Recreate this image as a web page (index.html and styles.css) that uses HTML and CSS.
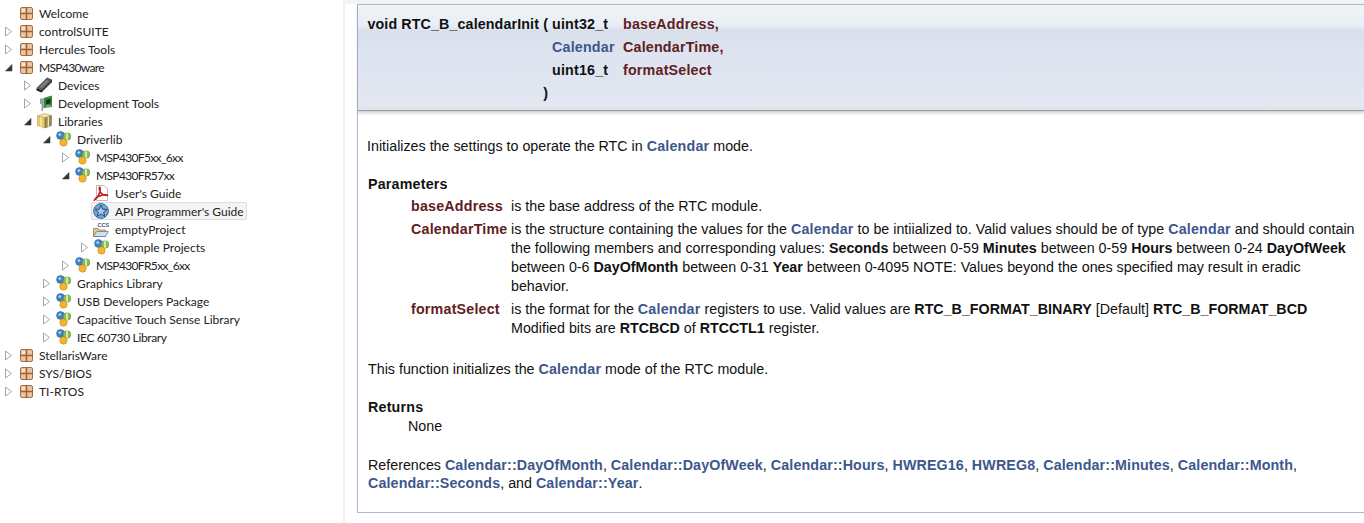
FILE: index.html
```html
<!DOCTYPE html>
<html lang="en">
<head>
  <meta charset="UTF-8" />
  <title>RTC_B_calendarInit</title>
  <link rel="stylesheet" href="styles.css">
</head>
<body>
  <svg class="defs" width="0" height="0">
    <symbol id="closed" viewBox="0 0 9 11">
      <path d="M1.5 1 L7.5 5.5 L1.5 10 Z" fill="#fff" stroke="#a6a6a6" />
    </symbol>
    <symbol id="open" viewBox="0 0 9 11">
      <path d="M8 2.5 L8 9 L1.5 9 Z" fill="#333" stroke="#444" stroke-width=".6" />
    </symbol>
    <symbol id="pkg" viewBox="0 0 16 16">
      <rect x="3.5" y="2.5" width="12" height="12" rx="1.5" fill="#e8c4a0" stroke="#a86e3e" />
      <path d="M9.5 2 V15 M3 8.5 H16" stroke="#9e6236" stroke-width="1.5" />
      <path d="M5 4 H8 V7 H5 Z" fill="#f6e2cc" />
    </symbol>
    <symbol id="chip" viewBox="0 0 16 16">
      <path d="M.5 11 L11 .5 L16 2.5 L5.5 13 Z" fill="#55585c" />
      <path d="M5.5 13 L16 2.5 V5 L5.5 15.5 L.5 13.5 V11 Z" fill="#1f2022" />
      <path d="M3.5 10 L10.5 3 L13 4 L6 11 Z" fill="#7c8084" />
      <path d="M7 14 L7.6 12.5 M9 12 L9.6 10.5 M11 10 L11.6 8.5 M13 8 L13.6 6.5" stroke="#9a9da0" stroke-width=".8" />
    </symbol>
    <symbol id="board" viewBox="0 0 16 16">
      <path d="M7.5 3 L16 .5 V12 L7.5 13 Z" fill="#2f8a3c" />
      <path d="M10 5 L14.5 3.5 V8.5 L10 9.3 Z" fill="#17351c" />
      <path d="M10 10.5 H15 V11.5 H10 Z" fill="#c9c27a" />
      <path d="M4 3.5 H7.5 V12 L7 16 H5.5 L5.5 9 L4 9 Z" fill="#8fa0a8" />
    </symbol>
    <symbol id="cube" viewBox="0 0 16 16">
      <path d="M1.5 3 L8 .5 L15.5 2.5 L9 5 Z" fill="#f5e6a6" stroke="#a58f4a" stroke-width=".5" />
      <path d="M1.5 3 L9 5 V15 L1.5 12.5 Z" fill="#e8c864" stroke="#a58f4a" stroke-width=".5" />
      <path d="M9 5 L15.5 2.5 V12.5 L9 15 Z" fill="#9a8850" stroke="#7a6c3a" stroke-width=".5" />
      <path d="M5 4 V13.7 M12.3 3.8 V13.8" stroke="#f8efc8" stroke-width="1.2" />
    </symbol>
    <symbol id="feature" viewBox="0 0 16 16">
      <circle cx="5.5" cy="4.5" r="3.9" fill="#3f83c6" stroke="#2c5f96" stroke-width=".6" />
      <circle cx="4.8" cy="3.6" r="1.4" fill="#a9d3f2" />
      <circle cx="12" cy="5.5" r="3.8" fill="#8cc04a" stroke="#5c8c30" stroke-width=".6" />
      <path d="M12 1.5 V9.5" stroke="#fff" stroke-width="1.2" />
      <circle cx="8.5" cy="11.5" r="3.7" fill="#f4b42c" stroke="#c88a1c" stroke-width=".6" />
    </symbol>
    <symbol id="pdf" viewBox="0 0 16 16">
      <path d="M3.5 .5 H11 L14.5 4 V15.5 H3.5 Z" fill="#fff" stroke="#b9b9b9" />
      <path d="M1.5 15 C5 13 8 6 7 2.5 C6.5 1.5 6 3 6.5 5 C7.5 9 10 10.5 14.5 10.5 C15 9.5 11 9.5 8 10.5 C5 11.5 2 13 1.5 15 Z" fill="none" stroke="#c8201c" stroke-width="1.6" />
    </symbol>
    <symbol id="api" viewBox="0 0 16 16">
      <circle cx="8" cy="8" r="7.4" fill="#7aa5d0" stroke="#3a6a9e" />
      <path d="M8 2 L9.7 6.2 L14 6.4 L10.6 9.2 L11.8 13.4 L8 11 L4.2 13.4 L5.4 9.2 L2 6.4 L6.3 6.2 Z" fill="#a9c9e6" stroke="#1f4f86" />
    </symbol>
    <symbol id="ccs" viewBox="0 0 16 16">
      <text x="4.5" y="5.5" class="ccs-text">CCS</text>
      <path d="M.5 7.5 H5 L6 9 H12.5 V15.5 H.5 Z" fill="#e9c878" stroke="#8a7440" stroke-width=".7" />
      <path d="M.5 15.5 L3.5 10.5 H15.5 L12.5 15.5 Z" fill="#cfe0f2" stroke="#54708f" stroke-width=".7" />
    </symbol>
  </svg>

  <div class="page">
    <nav class="tree">
      <div class="row"><span class="arrow"></span><svg class="icon"><use href="#pkg"/></svg><span class="label">Welcome</span></div>
      <div class="row"><svg class="arrow"><use href="#closed"/></svg><svg class="icon"><use href="#pkg"/></svg><span class="label">controlSUITE</span></div>
      <div class="row"><svg class="arrow"><use href="#closed"/></svg><svg class="icon"><use href="#pkg"/></svg><span class="label">Hercules Tools</span></div>
      <div class="row"><svg class="arrow"><use href="#open"/></svg><svg class="icon"><use href="#pkg"/></svg><span class="label tight">MSP430ware</span></div>
      <div class="row lv1"><svg class="arrow"><use href="#closed"/></svg><svg class="icon"><use href="#chip"/></svg><span class="label">Devices</span></div>
      <div class="row lv1"><svg class="arrow"><use href="#closed"/></svg><svg class="icon"><use href="#board"/></svg><span class="label">Development Tools</span></div>
      <div class="row lv1"><svg class="arrow"><use href="#open"/></svg><svg class="icon"><use href="#cube"/></svg><span class="label">Libraries</span></div>
      <div class="row lv2"><svg class="arrow"><use href="#open"/></svg><svg class="icon"><use href="#feature"/></svg><span class="label">Driverlib</span></div>
      <div class="row lv3"><svg class="arrow"><use href="#closed"/></svg><svg class="icon"><use href="#feature"/></svg><span class="label tight">MSP430F5xx_6xx</span></div>
      <div class="row lv3"><svg class="arrow"><use href="#open"/></svg><svg class="icon"><use href="#feature"/></svg><span class="label tight">MSP430FR57xx</span></div>
      <div class="row lv4"><span class="arrow"></span><svg class="icon"><use href="#pdf"/></svg><span class="label">User's Guide</span></div>
      <div class="row lv4"><span class="arrow"></span><span class="selected"><svg class="icon"><use href="#api"/></svg><span class="label">API Programmer's Guide</span></span></div>
      <div class="row lv4"><span class="arrow"></span><svg class="icon"><use href="#ccs"/></svg><span class="label">emptyProject</span></div>
      <div class="row lv4"><svg class="arrow"><use href="#closed"/></svg><svg class="icon"><use href="#feature"/></svg><span class="label">Example Projects</span></div>
      <div class="row lv3"><svg class="arrow"><use href="#closed"/></svg><svg class="icon"><use href="#feature"/></svg><span class="label tight">MSP430FR5xx_6xx</span></div>
      <div class="row lv2"><svg class="arrow"><use href="#closed"/></svg><svg class="icon"><use href="#feature"/></svg><span class="label">Graphics Library</span></div>
      <div class="row lv2"><svg class="arrow"><use href="#closed"/></svg><svg class="icon"><use href="#feature"/></svg><span class="label">USB Developers Package</span></div>
      <div class="row lv2"><svg class="arrow"><use href="#closed"/></svg><svg class="icon"><use href="#feature"/></svg><span class="label">Capacitive Touch Sense Library</span></div>
      <div class="row lv2"><svg class="arrow"><use href="#closed"/></svg><svg class="icon"><use href="#feature"/></svg><span class="label digits">IEC 60730 Library</span></div>
      <div class="row"><svg class="arrow"><use href="#closed"/></svg><svg class="icon"><use href="#pkg"/></svg><span class="label">StellarisWare</span></div>
      <div class="row"><svg class="arrow"><use href="#closed"/></svg><svg class="icon"><use href="#pkg"/></svg><span class="label">SYS/BIOS</span></div>
      <div class="row"><svg class="arrow"><use href="#closed"/></svg><svg class="icon"><use href="#pkg"/></svg><span class="label">TI-RTOS</span></div>
    </nav>

    <main class="doc">
      <div class="memitem">
        <div class="memproto">
          <span class="memname">void RTC_B_calendarInit (</span>
          <span class="type">uint32_t</span>
          <span class="paramname">baseAddress,</span>
          <span></span>
          <span class="type"><a>Calendar</a></span>
          <span class="paramname">CalendarTime,</span>
          <span></span>
          <span class="type">uint16_t</span>
          <span class="paramname">formatSelect</span>
          <span class="memname">)</span>
        </div>
        <div class="memdoc">
          <p class="intro">Initializes the settings to operate the RTC in <a>Calendar</a> mode.</p>

          <h4>Parameters</h4>
          <div class="params">
            <span class="paramname">baseAddress</span>
            <span>is the base address of the RTC module.</span>
            <span class="paramname">CalendarTime</span>
            <span>is the structure containing the values for the <a>Calendar</a> to be intiialized to. Valid values should be of type <a>Calendar</a> and should contain the following members and corresponding values: <b>Seconds</b> between 0-59 <b>Minutes</b> between 0-59 <b>Hours</b> between 0-24 <b>DayOfWeek</b> between 0-6 <b>DayOfMonth</b> between 0-31 <b>Year</b> between 0-4095 NOTE: Values beyond the ones specified may result in eradic behavior.</span>
            <span class="paramname">formatSelect</span>
            <span>is the format for the <a>Calendar</a> registers to use. Valid values are <b>RTC_B_FORMAT_BINARY</b> [Default] <b>RTC_B_FORMAT_BCD</b> Modified bits are <b>RTCBCD</b> of <b>RTCCTL1</b> register.</span>
          </div>

          <p class="desc">This function initializes the <a>Calendar</a> mode of the RTC module.</p>

          <h4 class="returns">Returns</h4>
          <p class="none">None</p>

          <p class="refs">References <a>Calendar::DayOfMonth</a>, <a>Calendar::DayOfWeek</a>, <a>Calendar::Hours</a>, <a>HWREG16</a>, <a>HWREG8</a>, <a>Calendar::Minutes</a>, <a>Calendar::Month</a>, <a>Calendar::Seconds</a>, and <a>Calendar::Year</a>.</p>
        </div>
      </div>
    </main>
  </div>
</body>
</html>
```

FILE: styles.css
```css
html, body {
  margin: 0;
  height: 100%;
  overflow: hidden;
  background: #fff;
}
.defs {
  display: none;
}
.ccs-text {
  font-family: "Liberation Sans", sans-serif;
  font-size: 5.5px;
  font-weight: bold;
  fill: #3a5a80;
}
.page {
  display: flex;
  height: 523px;
}

/* project tree */
.tree {
  width: 343px;
  flex: none;
  padding-top: 4px;
  font-family: Lato, sans-serif;
  font-size: 12px;
  color: #222;
}
.row {
  display: flex;
  align-items: center;
  height: 18px;
}
.lv1 { padding-left: 19px; }
.lv2 { padding-left: 38px; }
.lv3 { padding-left: 57px; }
.lv4 { padding-left: 76px; }
.arrow {
  width: 9px;
  height: 11px;
  flex: none;
  margin: 1px 4px 0 4px;
}
.icon {
  width: 16px;
  height: 16px;
  flex: none;
}
.label {
  margin-left: 6px;
  white-space: nowrap;
}
.tight {
  letter-spacing: -.65px;
}
.digits {
  letter-spacing: -.35px;
}
.selected {
  display: flex;
  align-items: center;
  height: 16px;
  margin-left: -2px;
  padding: 0 2px 0 1px;
  background: #f4f4f4;
  border: 1px solid #dcdcdc;
  border-radius: 2px;
}

/* doc pane */
.doc {
  flex: 1;
  min-width: 0;
  border-left: 2px solid #f1f1f1;
  padding: 4px 0 0 12px;
  background: linear-gradient(#f3f3f3 4px, #fff 4px);
  font-family: "Liberation Sans", Arial, sans-serif;
  font-size: 14.27px;
  line-height: 18.7px;
  color: #111;
}
.doc a,
.doc h4,
.paramname,
.memproto {
  font-weight: bold;
  letter-spacing: .2px;
}
.doc a {
  color: #3d578c;
}
.memitem {
  border-left: 1px solid #a8b8d9;
  border-bottom: 1px solid #a8b8d9;
  background: #fff;
}
.memproto {
  display: grid;
  grid-template-columns: 188px 71px 1fr;
  grid-auto-rows: 23px;
  align-items: center;
  height: 107px;
  box-sizing: border-box;
  padding: 8px 0 0 6px;
  border-top: 1px solid #a8b8d9;
  border-bottom: 1px solid #9a9a9f;
  background: linear-gradient(#f1f4f4 0, #e9eef6 20px, #d8e0ec 26px, #dee4f0 50px, #e2e7f1 100px, #e0e3e8 106px);
  box-shadow: 0 2px 3px rgba(0, 0, 0, .2);
}
.memname {
  justify-self: end;
  padding-right: 4px;
  letter-spacing: .12px;
}
.paramname {
  color: #602020;
}
.memdoc {
  padding: 26px 7px 0 10px;
  height: 401px;
  box-sizing: border-box;
}
.memdoc p,
.memdoc h4 {
  margin: 0;
  font-size: 14.27px;
}
.memdoc h4 {
  margin-top: 19px;
}
.memdoc .intro {
  margin-left: -1px;
}
.params {
  display: grid;
  grid-template-columns: 100px 1fr;
  row-gap: 4.1px;
  margin: 4px 0 0 43px;
  line-height: 18.9px;
}
.memdoc .desc {
  margin-top: 22.5px;
}
.memdoc .returns {
  margin-top: 19px;
}
.memdoc .none {
  margin-top: .5px;
  margin-left: 40px;
}
.memdoc .refs {
  margin-top: 19.5px;
}
.refs a {
  letter-spacing: .13px;
}
```
